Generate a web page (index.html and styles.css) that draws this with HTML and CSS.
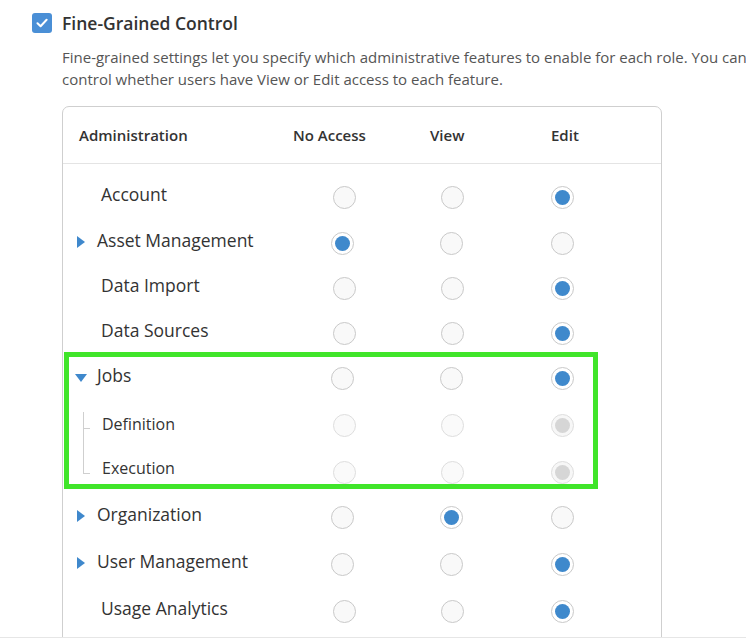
FILE: index.html
```html
<!DOCTYPE html>
<html lang="en">
<head>
<meta charset="utf-8">
<title>Fine-Grained Control</title>
<link rel="stylesheet" href="styles.css">
</head>
<body>
<div class="page">
  <div class="option">
    <span class="checkbox">
      <svg width="12" height="10" viewBox="0 0 12 10"><path d="M1.5 5.2 L4.6 8.2 L10.6 1.8" fill="none" stroke="#fff" stroke-width="2" stroke-linecap="round" stroke-linejoin="round"/></svg>
    </span>
    <span class="option-title">Fine-Grained Control</span>
  </div>
  <p class="desc">Fine-grained settings let you specify which administrative features to enable for each role. You can control whether users have View or Edit access to each feature.</p>

  <div class="perm-table">
    <div class="perm-head">
      <span>Administration</span>
      <span>No Access</span>
      <span>View</span>
      <span>Edit</span>
    </div>
    <div class="perm-body">
      <div class="perm-row">
        <span class="label">Account</span>
        <span class="radio"></span><span class="radio"></span><span class="radio on"></span>
      </div>
      <div class="perm-row expandable">
        <span class="label"><i class="tri-right"></i>Asset Management</span>
        <span class="radio on"></span><span class="radio"></span><span class="radio"></span>
      </div>
      <div class="perm-row tight">
        <span class="label">Data Import</span>
        <span class="radio"></span><span class="radio"></span><span class="radio on"></span>
      </div>
      <div class="perm-row">
        <span class="label">Data Sources</span>
        <span class="radio"></span><span class="radio"></span><span class="radio on"></span>
      </div>
      <div class="group">
        <div class="perm-row expandable tight">
          <span class="label"><i class="tri-down"></i>Jobs</span>
          <span class="radio"></span><span class="radio"></span><span class="radio on"></span>
        </div>
        <div class="perm-row sub first taller">
          <span class="label">Definition</span>
          <span class="radio off"></span><span class="radio off"></span><span class="radio off on"></span>
        </div>
        <div class="perm-row sub last tight">
          <span class="label">Execution</span>
          <span class="radio off"></span><span class="radio off"></span><span class="radio off on"></span>
        </div>
        <div class="highlight"></div>
      </div>
      <div class="perm-row expandable">
        <span class="label"><i class="tri-right"></i>Organization</span>
        <span class="radio"></span><span class="radio on"></span><span class="radio"></span>
      </div>
      <div class="perm-row expandable tall">
        <span class="label"><i class="tri-right"></i>User Management</span>
        <span class="radio"></span><span class="radio"></span><span class="radio on"></span>
      </div>
      <div class="perm-row">
        <span class="label">Usage Analytics</span>
        <span class="radio"></span><span class="radio"></span><span class="radio on"></span>
      </div>
    </div>
  </div>
</div>
</body>
</html>
```

FILE: styles.css
```css
html, body {
  margin: 0;
  padding: 0;
  background: #fff;
  overflow: hidden;
}

body {
  font-family: "Open Sans", "Liberation Sans", sans-serif;
  color: #333;
}

.page {
  height: 637px;
  overflow: hidden;
  border-bottom: 1px solid #e6e6e6;
  padding-left: 32px;
  box-sizing: content-box;
}

.option {
  display: flex;
  align-items: center;
  gap: 10px;
  padding-top: 13px;
  height: 20px;
}

.checkbox {
  width: 20px;
  height: 20px;
  border-radius: 3px;
  background: #4a8fd6;
  display: flex;
  align-items: center;
  justify-content: center;
  flex: none;
}

.option-title {
  font-size: 17.5px;
  font-weight: 600;
  color: #333;
  line-height: 20px;
}

.desc {
  margin: 13px 0 0 30px;
  width: 720px;
  font-size: 15px;
  line-height: 22px;
  color: #555;
}

.perm-table {
  margin: 16px 0 0 30px;
  width: 598px;
  height: 600px;
  border: 1px solid #cfcfcf;
  border-radius: 7px;
}

.perm-head {
  display: grid;
  grid-template-columns: 214px 137px 121px 1fr;
  align-items: center;
  height: 55px;
  padding-bottom: 1px;
  padding-left: 16px;
  border-bottom: 1px solid #e4e4e4;
  font-size: 15px;
  font-weight: 600;
  color: #333;
}

.perm-body {
  padding-top: 10px;
}

.perm-row {
  display: grid;
  grid-template-columns: 270px 108px 110px 1fr;
  align-items: center;
  height: 46px;
}

.perm-row.tight {
  height: 44px;
}

.perm-row.tall {
  height: 48px;
}

.perm-row.taller {
  height: 50px;
}

.perm-row.expandable {
  grid-template-columns: 268px 109px 111px 1fr;
}

.label {
  position: relative;
  padding-left: 38px;
  font-size: 17.5px;
  line-height: 24px;
  margin-top: -6px;
  color: #333;
  display: flex;
  align-items: center;
}

.expandable .label {
  padding-left: 14px;
}

.tri-right {
  width: 0;
  height: 0;
  border-top: 6px solid transparent;
  border-bottom: 6px solid transparent;
  border-left: 8px solid #3f88cc;
  margin: 3px 12px 0 0;
}

.tri-down {
  width: 0;
  height: 0;
  border-left: 6px solid transparent;
  border-right: 6px solid transparent;
  border-top: 8px solid #3f88cc;
  margin: 6px 10px 0 -2px;
}

.sub .label {
  padding-left: 39px;
  font-size: 16px;
  margin-top: -2px;
}

.sub.last .label {
  margin-top: -8px;
}

.sub.first .label::before {
  content: "";
  position: absolute;
  left: 20px;
  top: 0;
  width: 6px;
  height: 16px;
  border-left: 1px solid #cfcfcf;
  border-bottom: 1px solid #cfcfcf;
}

.sub.first .label::after {
  content: "";
  position: absolute;
  left: 20px;
  top: 16px;
  height: 28px;
  border-left: 1px solid #cfcfcf;
}

.sub.last .label::before {
  content: "";
  position: absolute;
  left: 20px;
  top: -7px;
  width: 6px;
  height: 24px;
  border-left: 1px solid #cfcfcf;
  border-bottom: 1px solid #cfcfcf;
}

.radio {
  width: 21px;
  height: 21px;
  border-radius: 50%;
  border: 1px solid #c9c9c9;
  background: #f9f9f9;
  display: flex;
  align-items: center;
  justify-content: center;
}

.radio.on {
  background: #fff;
}

.radio.on::after {
  content: "";
  width: 15px;
  height: 15px;
  border-radius: 50%;
  background: #3f89cc;
}

.radio.off {
  border-color: #dedede;
  background: #fafafa;
}

.radio.off.on {
  background: #f7f7f7;
}

.radio.off.on::after {
  background: #d6d6d6;
}

.group {
  position: relative;
}

.highlight {
  position: absolute;
  left: 1px;
  top: -4px;
  width: 524px;
  height: 127px;
  border: 5px solid #40e52a;
  pointer-events: none;
}
```
